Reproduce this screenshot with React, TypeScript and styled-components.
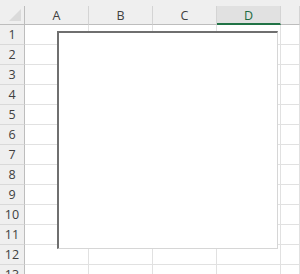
import React from "react";
import styled, { createGlobalStyle } from "styled-components";

const GlobalStyle = createGlobalStyle`
  html, body {
    margin: 0;
    padding: 0;
    background: #ffffff;
    overflow: hidden;
  }
  body {
    font-family: "Open Sans", "Noto Sans", sans-serif;
  }
`;

const COLS = ["A", "B", "C", "D"];
const ROWS = Array.from({ length: 13 }, (_, i) => i + 1);
const SELECTED_COL = "D";

const Sheet = styled.div`
  position: relative;
  width: 300px;
  height: 274px;
  overflow: hidden;
  background: #ffffff;
`;

const TopStrip = styled.div`
  height: 6px;
  background: #efefef;
`;

const Grid = styled.div`
  display: grid;
  grid-template-columns: 25px repeat(4, 64px) 1fr;
  grid-template-rows: 19px repeat(13, 20px);
`;

const Corner = styled.div`
  position: relative;
  background: #efefef;
  border-right: 1px solid #bdbdbd;
  border-bottom: 1px solid #bdbdbd;
  box-sizing: border-box;
`;

const CornerTriangle = styled.div`
  position: absolute;
  right: 3px;
  bottom: 3px;
  width: 0;
  height: 0;
  border-left: 12px solid transparent;
  border-bottom: 12px solid #dadada;
`;

const ColHeader = styled.div<{ $selected?: boolean }>`
  display: flex;
  align-items: center;
  justify-content: center;
  box-sizing: border-box;
  background: ${(p) => (p.$selected ? "#e1e1e1" : "#efefef")};
  border-right: 1px solid #d4d4d4;
  border-bottom: ${(p) => (p.$selected ? "2px solid #217346" : "1px solid #bdbdbd")};
  color: ${(p) => (p.$selected ? "#1d6b41" : "#404040")};
  font-size: 12.5px;
  padding-top: ${(p) => (p.$selected ? "1px" : "0")};
`;

const RowHeader = styled.div`
  display: flex;
  align-items: center;
  justify-content: center;
  box-sizing: border-box;
  background: #efefef;
  border-right: 1px solid #bdbdbd;
  border-bottom: 1px solid #d9d9d9;
  color: #404040;
  font-size: 12.5px;
`;

const Cell = styled.div`
  box-sizing: border-box;
  border-right: 1px solid #e1e1e1;
  border-bottom: 1px solid #e1e1e1;
  background: #ffffff;
`;

const Frame = styled.div`
  position: absolute;
  left: 57px;
  top: 31px;
  width: 221px;
  height: 218px;
  box-sizing: border-box;
  background: #ffffff;
  border-top: 2px solid #6f6f6f;
  border-left: 2px solid #6f6f6f;
  border-right: 1px solid #d6d6d6;
  border-bottom: 1px solid #d6d6d6;
`;

export default function App() {
  return (
    <>
      <GlobalStyle />
      <Sheet>
        <TopStrip />
        <Grid>
          <Corner>
            <CornerTriangle />
          </Corner>
          {COLS.map((c) => (
            <ColHeader key={c} $selected={c === SELECTED_COL}>
              {c}
            </ColHeader>
          ))}
          <ColHeader />
          {ROWS.map((r) => (
            <React.Fragment key={r}>
              <RowHeader>{r}</RowHeader>
              {COLS.map((c) => (
                <Cell key={c} />
              ))}
              <Cell />
            </React.Fragment>
          ))}
        </Grid>
        <Frame />
      </Sheet>
    </>
  );
}
